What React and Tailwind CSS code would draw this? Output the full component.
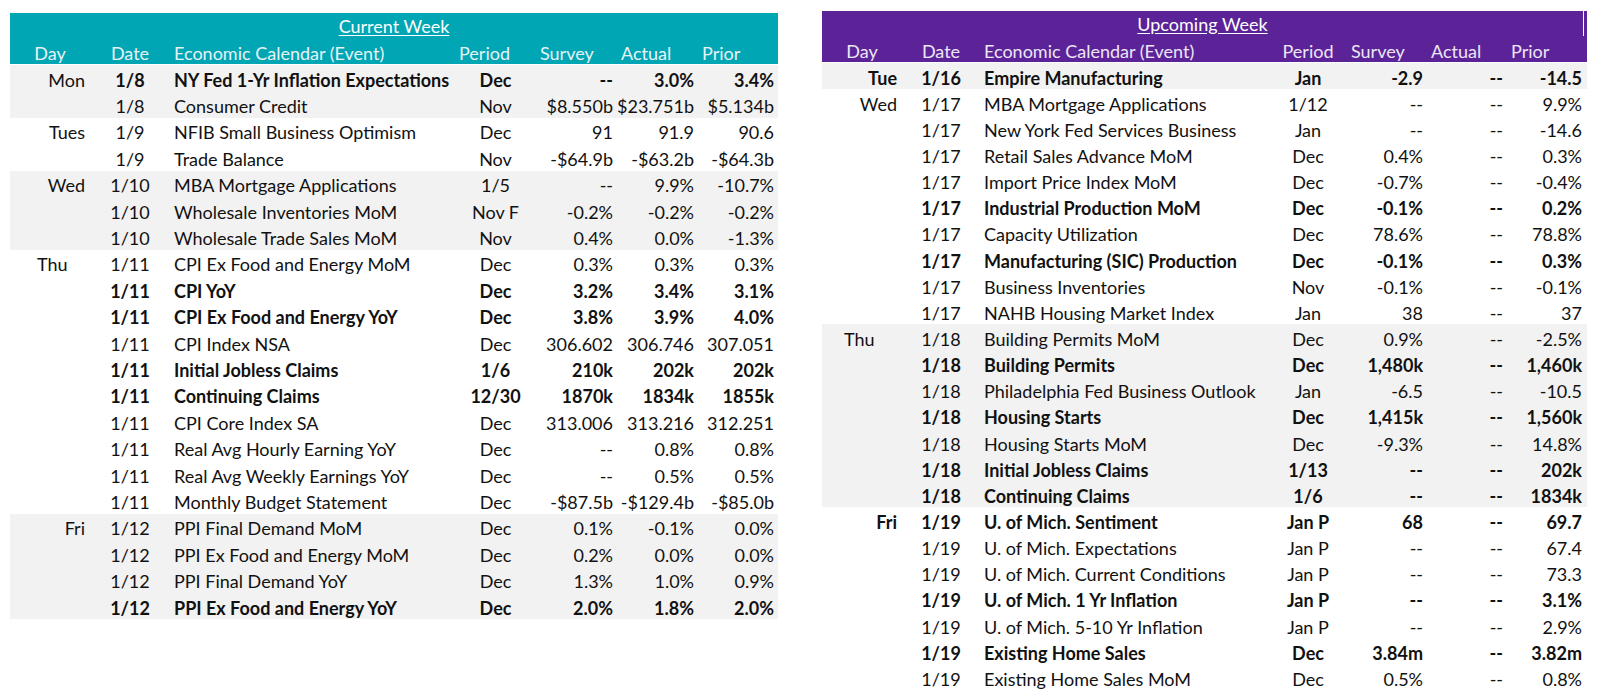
import React from 'react';

const current = [
  { g: 0, day: 'Mon', date: '1/8', ev: 'NY Fed 1-Yr Inflation Expectations', per: 'Dec', sv: '--', ac: '3.0%', pr: '3.4%', b: true },
  { g: 0, date: '1/8', ev: 'Consumer Credit', per: 'Nov', sv: '$8.550b', ac: '$23.751b', pr: '$5.134b' },
  { g: 1, day: 'Tues', date: '1/9', ev: 'NFIB Small Business Optimism', per: 'Dec', sv: '91', ac: '91.9', pr: '90.6' },
  { g: 1, date: '1/9', ev: 'Trade Balance', per: 'Nov', sv: '-$64.9b', ac: '-$63.2b', pr: '-$64.3b' },
  { g: 0, day: 'Wed', date: '1/10', ev: 'MBA Mortgage Applications', per: '1/5', sv: '--', ac: '9.9%', pr: '-10.7%' },
  { g: 0, date: '1/10', ev: 'Wholesale Inventories MoM', per: 'Nov F', sv: '-0.2%', ac: '-0.2%', pr: '-0.2%' },
  { g: 0, date: '1/10', ev: 'Wholesale Trade Sales MoM', per: 'Nov', sv: '0.4%', ac: '0.0%', pr: '-1.3%' },
  { g: 1, day: 'Thu', left: true, date: '1/11', ev: 'CPI Ex Food and Energy MoM', per: 'Dec', sv: '0.3%', ac: '0.3%', pr: '0.3%' },
  { g: 1, date: '1/11', ev: 'CPI YoY', per: 'Dec', sv: '3.2%', ac: '3.4%', pr: '3.1%', b: true },
  { g: 1, date: '1/11', ev: 'CPI Ex Food and Energy YoY', per: 'Dec', sv: '3.8%', ac: '3.9%', pr: '4.0%', b: true },
  { g: 1, date: '1/11', ev: 'CPI Index NSA', per: 'Dec', sv: '306.602', ac: '306.746', pr: '307.051' },
  { g: 1, date: '1/11', ev: 'Initial Jobless Claims', per: '1/6', sv: '210k', ac: '202k', pr: '202k', b: true },
  { g: 1, date: '1/11', ev: 'Continuing Claims', per: '12/30', sv: '1870k', ac: '1834k', pr: '1855k', b: true },
  { g: 1, date: '1/11', ev: 'CPI Core Index SA', per: 'Dec', sv: '313.006', ac: '313.216', pr: '312.251' },
  { g: 1, date: '1/11', ev: 'Real Avg Hourly Earning YoY', per: 'Dec', sv: '--', ac: '0.8%', pr: '0.8%' },
  { g: 1, date: '1/11', ev: 'Real Avg Weekly Earnings YoY', per: 'Dec', sv: '--', ac: '0.5%', pr: '0.5%' },
  { g: 1, date: '1/11', ev: 'Monthly Budget Statement', per: 'Dec', sv: '-$87.5b', ac: '-$129.4b', pr: '-$85.0b' },
  { g: 0, day: 'Fri', date: '1/12', ev: 'PPI Final Demand MoM', per: 'Dec', sv: '0.1%', ac: '-0.1%', pr: '0.0%' },
  { g: 0, date: '1/12', ev: 'PPI Ex Food and Energy MoM', per: 'Dec', sv: '0.2%', ac: '0.0%', pr: '0.0%' },
  { g: 0, date: '1/12', ev: 'PPI Final Demand YoY', per: 'Dec', sv: '1.3%', ac: '1.0%', pr: '0.9%' },
  { g: 0, date: '1/12', ev: 'PPI Ex Food and Energy YoY', per: 'Dec', sv: '2.0%', ac: '1.8%', pr: '2.0%', b: true },
];

const upcoming = [
  { g: 0, day: 'Tue', dayB: true, date: '1/16', ev: 'Empire Manufacturing', per: 'Jan', sv: '-2.9', pr: '-14.5', b: true },
  { g: 1, day: 'Wed', date: '1/17', ev: 'MBA Mortgage Applications', per: '1/12', sv: '--', pr: '9.9%' },
  { g: 1, date: '1/17', ev: 'New York Fed Services Business', per: 'Jan', sv: '--', pr: '-14.6' },
  { g: 1, date: '1/17', ev: 'Retail Sales Advance MoM', per: 'Dec', sv: '0.4%', pr: '0.3%' },
  { g: 1, date: '1/17', ev: 'Import Price Index MoM', per: 'Dec', sv: '-0.7%', pr: '-0.4%' },
  { g: 1, date: '1/17', ev: 'Industrial Production MoM', per: 'Dec', sv: '-0.1%', pr: '0.2%', b: true },
  { g: 1, date: '1/17', ev: 'Capacity Utilization', per: 'Dec', sv: '78.6%', pr: '78.8%' },
  { g: 1, date: '1/17', ev: 'Manufacturing (SIC) Production', per: 'Dec', sv: '-0.1%', pr: '0.3%', b: true },
  { g: 1, date: '1/17', ev: 'Business Inventories', per: 'Nov', sv: '-0.1%', pr: '-0.1%' },
  { g: 1, date: '1/17', ev: 'NAHB Housing Market Index', per: 'Jan', sv: '38', pr: '37' },
  { g: 0, day: 'Thu', left: true, date: '1/18', ev: 'Building Permits MoM', per: 'Dec', sv: '0.9%', pr: '-2.5%' },
  { g: 0, date: '1/18', ev: 'Building Permits', per: 'Dec', sv: '1,480k', pr: '1,460k', b: true },
  { g: 0, date: '1/18', ev: 'Philadelphia Fed Business Outlook', per: 'Jan', sv: '-6.5', pr: '-10.5' },
  { g: 0, date: '1/18', ev: 'Housing Starts', per: 'Dec', sv: '1,415k', pr: '1,560k', b: true },
  { g: 0, date: '1/18', ev: 'Housing Starts MoM', per: 'Dec', sv: '-9.3%', pr: '14.8%' },
  { g: 0, date: '1/18', ev: 'Initial Jobless Claims', per: '1/13', sv: '--', pr: '202k', b: true },
  { g: 0, date: '1/18', ev: 'Continuing Claims', per: '1/6', sv: '--', pr: '1834k', b: true },
  { g: 1, day: 'Fri', dayB: true, date: '1/19', ev: 'U. of Mich. Sentiment', per: 'Jan P', sv: '68', pr: '69.7', b: true },
  { g: 1, date: '1/19', ev: 'U. of Mich. Expectations', per: 'Jan P', sv: '--', pr: '67.4' },
  { g: 1, date: '1/19', ev: 'U. of Mich. Current Conditions', per: 'Jan P', sv: '--', pr: '73.3' },
  { g: 1, date: '1/19', ev: 'U. of Mich. 1 Yr Inflation', per: 'Jan P', sv: '--', pr: '3.1%', b: true },
  { g: 1, date: '1/19', ev: 'U. of Mich. 5-10 Yr Inflation', per: 'Jan P', sv: '--', pr: '2.9%' },
  { g: 1, date: '1/19', ev: 'Existing Home Sales', per: 'Dec', sv: '3.84m', pr: '3.82m', b: true },
  { g: 1, date: '1/19', ev: 'Existing Home Sales MoM', per: 'Dec', sv: '0.5%', pr: '0.8%' },
];

const CurrentWeek = () => (
  <div className="w-[768px] mt-[13px]">
    {/* header */}
    <div className="bg-[#00a6b4] text-[#e6f3f6]">
      <div className="h-[25px] flex items-center justify-center">
        <span className="underline underline-offset-2 text-white">Current Week</span>
      </div>
      <div className="h-[26px] flex items-center pt-[3px]">
        <div className="w-[80px] text-center">Day</div>
        <div className="w-[80px] text-center">Date</div>
        <div className="w-[285px] pl-[4px]">Economic Calendar (Event)</div>
        <div className="w-[81px] pl-[4px]">Period</div>
        <div className="w-[81px] pl-[4px]">Survey</div>
        <div className="w-[81px] pl-[4px]">Actual</div>
        <div className="w-[80px] pl-[4px]">Prior</div>
      </div>
    </div>
    <div className="mt-[1px]">
      {current.map((r, i) => (
        <div
          key={i}
          className={`h-[26.4px] flex items-center pt-[3px] ${r.g === 0 ? 'bg-[#f2f2f2]' : 'bg-white'} ${r.b ? 'font-bold' : ''}`}
        >
          <div className={`w-[80px] font-normal ${r.left ? 'pl-[27px]' : 'pr-[5px] text-right'}`}>{r.day}</div>
          <div className="w-[80px] text-center">{r.date}</div>
          <div className="w-[285px] pl-[4px]">{r.ev}</div>
          <div className="w-[81px] text-center">{r.per}</div>
          <div className="w-[81px] pr-[4px] text-right">{r.sv}</div>
          <div className="w-[81px] pr-[4px] text-right">{r.ac}</div>
          <div className="w-[80px] pr-[4px] text-right">{r.pr}</div>
        </div>
      ))}
    </div>
  </div>
);

const UpcomingWeek = () => (
  <div className="w-[765px] mt-[11px]">
    <div className="bg-[#5c2399] text-[#ece6f5]">
      <div className="h-[25px] mr-[3px] flex items-center justify-center border-r border-white">
        <span className="underline underline-offset-2 text-white">Upcoming Week</span>
      </div>
      <div className="h-[26px] flex items-center pt-[3px]">
        <div className="w-[80px] text-center">Day</div>
        <div className="w-[78px] text-center">Date</div>
        <div className="w-[298px] pl-[4px]">Economic Calendar (Event)</div>
        <div className="w-[60px] text-center">Period</div>
        <div className="w-[89px] pl-[13px]">Survey</div>
        <div className="w-[80px] pl-[4px]">Actual</div>
        <div className="w-[80px] pl-[4px]">Prior</div>
      </div>
    </div>
    <div className="mt-[1px]">
      {upcoming.map((r, i) => (
        <div
          key={i}
          className={`h-[26.15px] flex items-center pt-[3px] ${r.g === 0 ? 'bg-[#f2f2f2]' : 'bg-white'} ${r.b ? 'font-bold' : ''}`}
        >
          <div className={`w-[80px] ${r.dayB ? 'font-bold' : 'font-normal'} ${r.left ? 'pl-[22px]' : 'pr-[5px] text-right'}`}>{r.day}</div>
          <div className="w-[78px] text-center">{r.date}</div>
          <div className="w-[298px] pl-[4px]">{r.ev}</div>
          <div className="w-[60px] text-center">{r.per}</div>
          <div className="w-[89px] pr-[4px] text-right">{r.sv}</div>
          <div className="w-[80px] pr-[4px] text-right">--</div>
          <div className="w-[80px] pr-[5px] text-right">{r.pr}</div>
        </div>
      ))}
    </div>
  </div>
);

export default function App() {
  return (
    <div className="w-[1598px] h-[699px] bg-white text-[#111] text-[18px] leading-none whitespace-nowrap font-['Lato',_sans-serif] flex items-start pl-[10px] gap-[44px]">
      <CurrentWeek />
      <UpcomingWeek />
    </div>
  );
}
